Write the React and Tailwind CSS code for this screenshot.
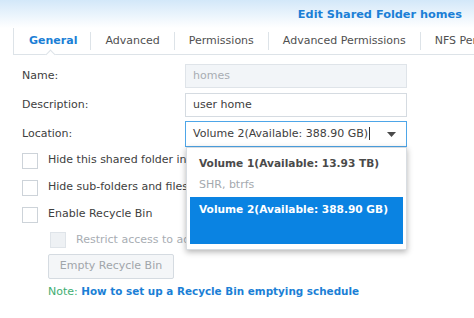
export default function App() {
  const tabs = ["General", "Advanced", "Permissions", "Advanced Permissions", "NFS Permissions"];
  return (
    <div className="w-[474px] h-[318px] overflow-hidden bg-white relative text-[11px] text-[#404040]" style={{ fontFamily: '"DejaVu Sans", Verdana, sans-serif' }}>
      <div className="h-[28px] bg-gradient-to-b from-[#d3e8f9] to-white flex items-start justify-end pr-[12px] pt-[7px]">
        <span className="font-bold text-[11.3px] text-[#1b7fd6]">Edit Shared Folder homes</span>
      </div>
      <div className="ml-[13px] h-[27px] border-l border-b border-[#dde3e8] flex items-center relative whitespace-nowrap">
        {tabs.map((t, i) => (
          <div key={t} className={`flex items-center ${i > 0 ? "border-l border-[#dde3e8]" : ""} h-[18px] ${i === 0 ? "pl-[15px] pr-[13px] font-bold text-[#1b7fd6]" : "px-[14px] text-[#505050]"}`}>
            {t}
          </div>
        ))}
        <div className="absolute left-[33px] bottom-[-4px] w-[7px] h-[7px] rotate-45 bg-white border-l border-t border-[#dde3e8]" />
      </div>

      <div className="pl-[22px] pr-[67px] pt-[9px] flex flex-col">
        <div className="flex items-center h-[24px]">
          <span className="w-[163px]">Name:</span>
          <div className="flex-1 h-[24px] bg-[#f2f5f8] border border-[#dfe4e9] px-[7px] flex items-center text-[#a8adb3]">homes</div>
        </div>
        <div className="flex items-center h-[24px] mt-[5px]">
          <span className="w-[163px]">Description:</span>
          <div className="flex-1 h-[24px] bg-white border border-[#d5dbe1] px-[7px] flex items-center">user home</div>
        </div>
        <div className="flex items-center h-[26px] mt-[4px] relative">
          <span className="w-[163px]">Location:</span>
          <div className="flex-1 h-[26px] bg-white border border-[#4ea6e8] px-[7px] flex items-center justify-between">
            <span>Volume 2(Available: 388.90 GB)<span className="inline-block w-px h-[13px] bg-[#333] align-middle ml-px" /></span>
            <svg width="9" height="5" viewBox="0 0 9 5" className="mr-[3px]"><path d="M0 0h9L4.5 5z" fill="#4a4a4a" /></svg>
          </div>
          <div className="absolute left-[164px] top-[26px] w-[221px] bg-white shadow-[0_2px_6px_rgba(0,0,0,0.3)] border border-[#d8dde2] pt-[7px] px-[3px] pb-[5px] z-10 whitespace-nowrap">
            <div className="pl-[9px] font-bold text-[10.6px] text-[#4a4a4a] h-[18px] flex items-center">Volume 1(Available: 13.93 TB)</div>
            <div className="pl-[9px] text-[#a4a9ae] h-[20px] flex items-center mt-[2px]">SHR, btrfs</div>
            <div className="mt-[2px] h-[47px] bg-[#0a83e2] text-white font-bold text-[10.6px] pl-[9px] pt-[5px]">Volume 2(Available: 388.90 GB)</div>
          </div>
        </div>

        <div className="flex flex-col">
          {["Hide this shared folder in \"My Network Places\"", "Hide sub-folders and files from users without permissions", "Enable Recycle Bin"].map((t) => (
            <div key={t} className="flex items-center h-[27px] whitespace-nowrap">
              <div className="w-[16px] h-[16px] border border-[#cdd3d9] bg-white mr-[10px] shrink-0" />
              <span>{t}</span>
            </div>
          ))}
          <div className="flex items-center h-[24px] pl-[28px] whitespace-nowrap text-[#a8adb3]">
            <div className="w-[16px] h-[16px] border border-[#dfe4e9] bg-[#eef1f4] mr-[10px] shrink-0" />
            <span>Restrict access to administrators only</span>
          </div>
          <div className="pl-[26px] mt-[2px]">
            <div className="w-[126px] h-[25px] border border-[#d5dbe1] bg-[#f4f6f8] rounded-[2px] flex items-center justify-center text-[#a0a5aa]">Empty Recycle Bin</div>
          </div>
          <div className="pl-[26px] mt-[5px] whitespace-nowrap">
            <span className="text-[#3fae72]">Note: </span>
            <span className="font-bold text-[10.4px] text-[#1b7fd6]">How to set up a Recycle Bin emptying schedule</span>
          </div>
        </div>
      </div>
    </div>
  );
}
